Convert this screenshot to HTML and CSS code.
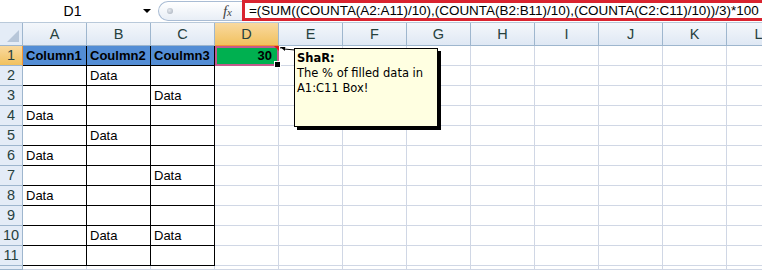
FILE: index.html
```html
<!DOCTYPE html>
<html>
<head>
<meta charset="utf-8">
<link rel="stylesheet" href="styles.css">
</head>
<body>
<div class="app">
  <div class="fbar">
    <div class="namebox"><span class="nb-text">D1</span><span class="nb-arrow"></span></div>
    <div class="grip"><span class="grip-dot"></span><span class="fx">f<i>x</i></span></div>
    <div class="formula">=(SUM((COUNTA(A2:A11)/10),(COUNTA(B2:B11)/10),(COUNTA(C2:C11)/10))/3)*100</div>
  </div>
  <div class="sheet">
    <div class="corner"><span class="corner-tri"></span></div>
    <div class="ch">A</div><div class="ch">B</div><div class="ch">C</div><div class="ch sel">D</div><div class="ch">E</div><div class="ch">F</div><div class="ch">G</div><div class="ch">H</div><div class="ch">I</div><div class="ch">J</div><div class="ch">K</div><div class="ch">L</div>

    <div class="rh sel">1</div>
    <div class="c t hd">Column1</div><div class="c t hd">Coulmn2</div><div class="c t hd">Coulmn3</div><div class="c active">30</div><div class="c"></div><div class="c"></div><div class="c"></div><div class="c"></div><div class="c"></div><div class="c"></div><div class="c"></div><div class="c"></div>

    <div class="rh">2</div>
    <div class="c t"></div><div class="c t">Data</div><div class="c t"></div><div class="c"></div><div class="c"></div><div class="c"></div><div class="c"></div><div class="c"></div><div class="c"></div><div class="c"></div><div class="c"></div><div class="c"></div>

    <div class="rh">3</div>
    <div class="c t"></div><div class="c t"></div><div class="c t">Data</div><div class="c"></div><div class="c"></div><div class="c"></div><div class="c"></div><div class="c"></div><div class="c"></div><div class="c"></div><div class="c"></div><div class="c"></div>

    <div class="rh">4</div>
    <div class="c t">Data</div><div class="c t"></div><div class="c t"></div><div class="c"></div><div class="c"></div><div class="c"></div><div class="c"></div><div class="c"></div><div class="c"></div><div class="c"></div><div class="c"></div><div class="c"></div>

    <div class="rh">5</div>
    <div class="c t"></div><div class="c t">Data</div><div class="c t"></div><div class="c"></div><div class="c"></div><div class="c"></div><div class="c"></div><div class="c"></div><div class="c"></div><div class="c"></div><div class="c"></div><div class="c"></div>

    <div class="rh">6</div>
    <div class="c t">Data</div><div class="c t"></div><div class="c t"></div><div class="c"></div><div class="c"></div><div class="c"></div><div class="c"></div><div class="c"></div><div class="c"></div><div class="c"></div><div class="c"></div><div class="c"></div>

    <div class="rh">7</div>
    <div class="c t"></div><div class="c t"></div><div class="c t">Data</div><div class="c"></div><div class="c"></div><div class="c"></div><div class="c"></div><div class="c"></div><div class="c"></div><div class="c"></div><div class="c"></div><div class="c"></div>

    <div class="rh">8</div>
    <div class="c t">Data</div><div class="c t"></div><div class="c t"></div><div class="c"></div><div class="c"></div><div class="c"></div><div class="c"></div><div class="c"></div><div class="c"></div><div class="c"></div><div class="c"></div><div class="c"></div>

    <div class="rh">9</div>
    <div class="c t"></div><div class="c t"></div><div class="c t"></div><div class="c"></div><div class="c"></div><div class="c"></div><div class="c"></div><div class="c"></div><div class="c"></div><div class="c"></div><div class="c"></div><div class="c"></div>

    <div class="rh">10</div>
    <div class="c t"></div><div class="c t">Data</div><div class="c t">Data</div><div class="c"></div><div class="c"></div><div class="c"></div><div class="c"></div><div class="c"></div><div class="c"></div><div class="c"></div><div class="c"></div><div class="c"></div>

    <div class="rh">11</div>
    <div class="c t"></div><div class="c t"></div><div class="c t"></div><div class="c"></div><div class="c"></div><div class="c"></div><div class="c"></div><div class="c"></div><div class="c"></div><div class="c"></div><div class="c"></div><div class="c"></div>

    <div class="rh"></div>
    <div class="c"></div><div class="c"></div><div class="c"></div><div class="c"></div><div class="c"></div><div class="c"></div><div class="c"></div><div class="c"></div><div class="c"></div><div class="c"></div><div class="c"></div><div class="c"></div>

    <svg class="connector" width="16" height="10" viewBox="0 0 16 10">
      <path d="M0 1 L5 0 L4 2 L15 3" stroke="#000" stroke-width="1" fill="none"/>
      <path d="M0 0 L5 0 L5 4 Z" fill="#000"/>
    </svg>
    <div class="comment">
      <b>ShaR:</b><br>The % of filled data in<br>A1:C11 Box!
    </div>
  </div>
</div>
</body>
</html>
```
FILE: styles.css
```css
html, body {
  margin: 0;
  padding: 0;
  background: #ffffff;
  overflow: hidden;
}
.app {
  width: 762px;
  height: 270px;
  overflow: hidden;
  font-family: "Liberation Sans", Arial, sans-serif;
}
.fbar {
  display: flex;
  height: 23px;
  background: #ffffff;
  border-bottom: 1px solid #b9c9da;
  box-sizing: border-box;
}
.namebox {
  width: 158px;
  display: flex;
  align-items: center;
  background: #fff;
}
.nb-text {
  flex: 1;
  text-align: center;
  font-size: 14px;
  color: #000;
  padding-left: 2px;
}
.nb-arrow {
  width: 0;
  height: 0;
  border-left: 4px solid transparent;
  border-right: 4px solid transparent;
  border-top: 4px solid #000;
  margin-right: 7px;
}
.grip {
  width: 84px;
  display: flex;
  align-items: center;
  border: 1px solid #a9bcd4;
  border-right: none;
  border-radius: 10px 0 0 10px;
  background: linear-gradient(#ffffff, #e8eef6);
  box-sizing: border-box;
  height: 20px;
  margin-top: 1px;
}
.grip-dot {
  width: 6px;
  height: 6px;
  border-radius: 50%;
  background: radial-gradient(circle at 40% 40%, #e4e8ee, #a3acb8);
  margin-left: 8px;
}
.fx {
  margin-left: auto;
  margin-right: 10px;
  font-family: "Liberation Serif", serif;
  font-style: italic;
  font-size: 15px;
  color: #444;
}
.fx i {
  font-size: 11px;
}
.formula {
  flex: 1;
  border: 3px solid #d9232f;
  border-right: none;
  height: 21px;
  box-sizing: border-box;
  font-size: 13.45px;
  line-height: 15px;
  padding-left: 4px;
  white-space: nowrap;
  overflow: hidden;
  color: #000;
}
.sheet {
  position: relative;
  display: grid;
  grid-template-columns: 23px repeat(12, 64px);
  grid-template-rows: 23px repeat(11, 20px) 4px;
}
.corner {
  background: #e4ecf7;
  border-right: 1px solid #9eb6ce;
  border-bottom: 1px solid #9eb6ce;
  box-sizing: border-box;
  position: relative;
}
.corner-tri {
  position: absolute;
  right: 3px;
  bottom: 3px;
  width: 0;
  height: 0;
  border-left: 12px solid transparent;
  border-bottom: 12px solid #b7c6d9;
}
.ch {
  background: linear-gradient(#f4f7fb, #dfe8f4);
  border-right: 1px solid #9eb6ce;
  border-bottom: 1px solid #9eb6ce;
  box-sizing: border-box;
  text-align: center;
  font-size: 14.5px;
  line-height: 23px;
  color: #27413e;
}
.ch.sel {
  background: linear-gradient(#f9d99f, #f1c15f);
  border-bottom: 1px solid #f29436;
}
.rh {
  background: #e4ecf7;
  border-right: 1px solid #9eb6ce;
  border-bottom: 1px solid #9eb6ce;
  box-sizing: border-box;
  text-align: center;
  font-size: 14.5px;
  line-height: 19px;
  color: #27413e;
  overflow: hidden;
}
.rh.sel {
  background: linear-gradient(#f9d99f, #f1c15f);
  border-right: 1px solid #f29436;
}
.c {
  border-right: 1px solid #d0d7e5;
  border-bottom: 1px solid #d0d7e5;
  box-sizing: border-box;
  font-size: 13px;
  line-height: 20px;
  padding-left: 3px;
  color: #000;
  white-space: nowrap;
  overflow: hidden;
}
.c.t {
  border-right: 1px solid #000;
  border-bottom: 1px solid #000;
}
.c.hd {
  background: #538dd5;
  font-weight: bold;
}
.c.active {
  background: #00b050;
  font-weight: bold;
  text-align: right;
  padding-right: 5px;
  border: 2px solid #c35a8c;
  line-height: 16px;
  position: relative;
  overflow: visible;
}
.c.active::before {
  content: "";
  position: absolute;
  right: -2px;
  top: -2px;
  border-left: 5px solid transparent;
  border-top: 5px solid #d81e1e;
}
.c.active::after {
  content: "";
  position: absolute;
  right: -4px;
  bottom: -4px;
  width: 5px;
  height: 5px;
  background: #000;
  border: 1px solid #fff;
}
.connector {
  position: absolute;
  left: 280px;
  top: 24px;
}
.comment {
  position: absolute;
  left: 294px;
  top: 25px;
  width: 144px;
  height: 79px;
  box-sizing: border-box;
  background: #ffffe1;
  border: 1px solid #000;
  box-shadow: 3px 3px 0 #000;
  padding: 2px 2px;
  font-family: "DejaVu Sans", Tahoma, sans-serif;
  font-size: 11.5px;
  line-height: 15px;
  color: #000;
}
```
